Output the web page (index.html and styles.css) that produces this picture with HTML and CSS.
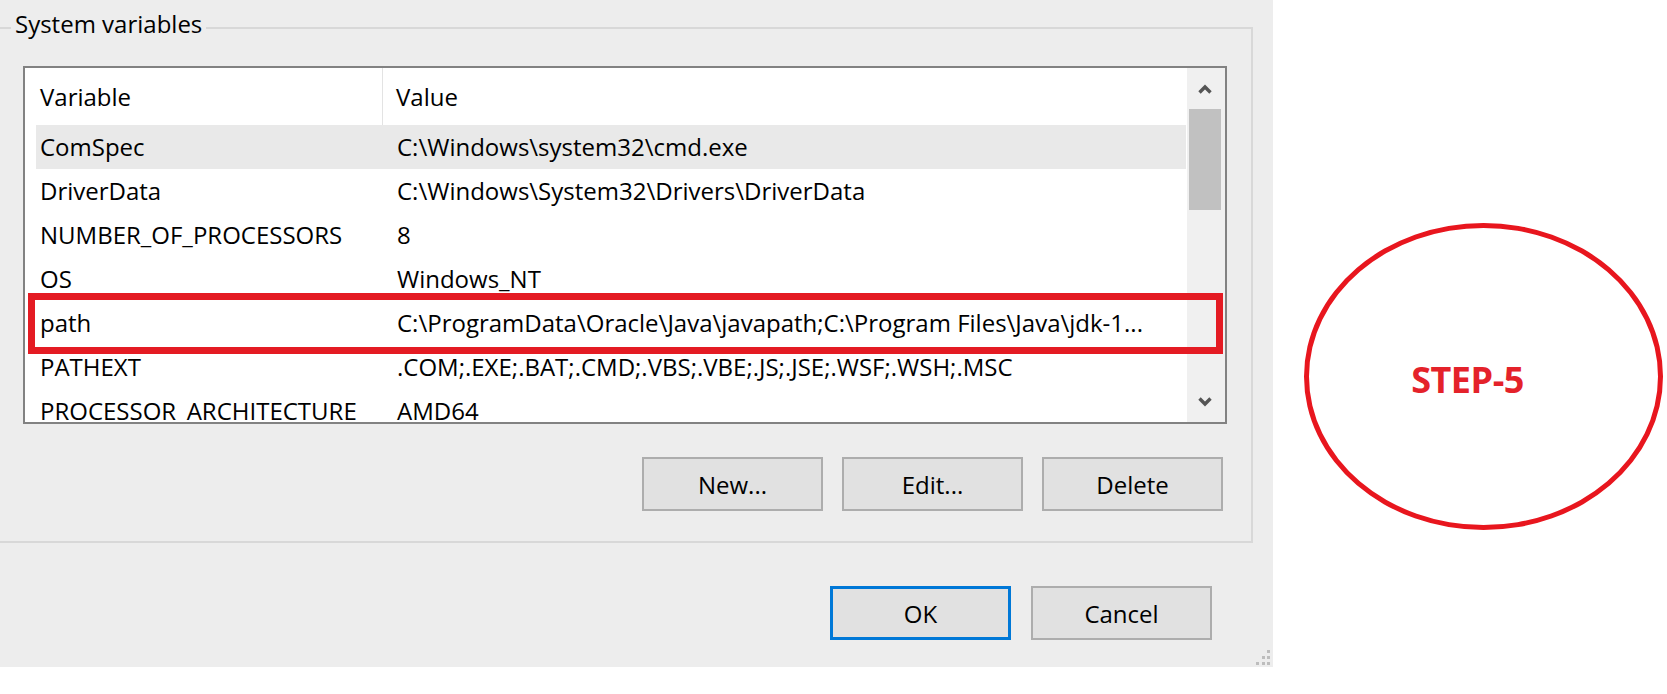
FILE: index.html
```html
<!DOCTYPE html>
<html lang="en">
<head>
<meta charset="utf-8">
<title>Environment Variables</title>
<link rel="stylesheet" href="styles.css">
</head>
<body>
<div class="page">
  <div class="dialog">
    <fieldset class="group">
      <legend>System variables</legend>
      <div class="listbox">
        <div class="list-main">
          <div class="list-header">
            <div class="hcell hcell-var">Variable</div>
            <div class="hcell hcell-val">Value</div>
          </div>
          <div class="list-body">
            <div class="row row-selected"><span class="c-var">ComSpec</span><span class="c-val">C:\Windows\system32\cmd.exe</span></div>
            <div class="row"><span class="c-var">DriverData</span><span class="c-val">C:\Windows\System32\Drivers\DriverData</span></div>
            <div class="row"><span class="c-var">NUMBER_OF_PROCESSORS</span><span class="c-val">8</span></div>
            <div class="row"><span class="c-var">OS</span><span class="c-val">Windows_NT</span></div>
            <div class="row"><span class="c-var">path</span><span class="c-val">C:\ProgramData\Oracle\Java\javapath;C:\Program Files\Java\jdk-1...</span></div>
            <div class="row"><span class="c-var">PATHEXT</span><span class="c-val">.COM;.EXE;.BAT;.CMD;.VBS;.VBE;.JS;.JSE;.WSF;.WSH;.MSC</span></div>
            <div class="row"><span class="c-var">PROCESSOR_ARCHITECTURE</span><span class="c-val">AMD64</span></div>
          </div>
        </div>
        <div class="scrollbar">
          <div class="sb-btn">
            <svg width="16" height="10" viewBox="0 0 16 10"><polyline points="2.5,8.5 8,3 13.5,8.5" fill="none" stroke="#555" stroke-width="3.4"/></svg>
          </div>
          <div class="sb-thumb"></div>
          <div class="sb-track"></div>
          <div class="sb-btn">
            <svg width="16" height="10" viewBox="0 0 16 10"><polyline points="2.5,1.5 8,7 13.5,1.5" fill="none" stroke="#555" stroke-width="3.4"/></svg>
          </div>
        </div>
        <div class="highlight-box"></div>
      </div>
      <div class="group-buttons">
        <button class="btn">New...</button>
        <button class="btn">Edit...</button>
        <button class="btn">Delete</button>
      </div>
    </fieldset>
    <div class="footer">
      <button class="btn btn-default">OK</button>
      <button class="btn">Cancel</button>
    </div>
    <svg class="grip" width="18" height="18" viewBox="0 0 18 18">
      <rect x="14" y="1" width="3" height="3" fill="#bdbdbd"/>
      <rect x="9" y="7" width="3" height="3" fill="#bdbdbd"/>
      <rect x="14" y="7" width="3" height="3" fill="#bdbdbd"/>
      <rect x="3" y="13" width="3" height="3" fill="#bdbdbd"/>
      <rect x="9" y="13" width="3" height="3" fill="#bdbdbd"/>
      <rect x="14" y="13" width="3" height="3" fill="#bdbdbd"/>
    </svg>
  </div>
  <div class="annotation">
    <div class="step-oval"><span class="step-label">STEP-5</span></div>
  </div>
</div>
</body>
</html>
```

FILE: styles.css
```css
* { box-sizing: border-box; }

html, body {
  margin: 0;
  padding: 0;
  background: #ffffff;
}

body {
  font-family: "Open Sans", "Noto Sans", sans-serif;
  font-size: 24px;
  color: #000;
  width: 1667px;
  height: 694px;
  overflow: hidden;
}

.page {
  display: flex;
  align-items: flex-start;
}

.dialog {
  position: relative;
  flex-shrink: 0;
  width: 1273px;
  height: 667px;
  background: #ededed;
  display: flex;
  flex-direction: column;
  overflow: hidden;
}

.group {
  margin: 8px 0 0 -20px;
  width: 1273px;
  min-width: 0;
  border: 2px solid #d8d8d8;
  padding: 18px 24px 30px 41px;
}

.group legend {
  margin-left: -12px;
  padding: 0 4px 8px;
  font-size: 24px;
  line-height: 32px;
  color: #000;
}

.listbox {
  position: relative;
  height: 358px;
  border: 2px solid #828282;
  background: #fff;
  display: flex;
}

.list-main {
  flex: 1;
  min-width: 0;
  overflow: hidden;
}

.list-header {
  display: flex;
  height: 57px;
  line-height: 57px;
}

.hcell {
  white-space: nowrap;
}

.hcell-var {
  width: 358px;
  padding-left: 15px;
  border-right: 1px solid #e3e3e3;
}

.hcell-val {
  padding-left: 13px;
}

.list-body {
  padding: 0 1px 0 11px;
}

.row {
  display: grid;
  grid-template-columns: 347px 1fr;
  height: 44px;
  line-height: 44px;
  white-space: nowrap;
}

.row-selected {
  background: #e9e9e9;
}

.c-var {
  padding-left: 4px;
  overflow: hidden;
}

.c-val {
  padding-left: 14px;
  overflow: hidden;
}

.scrollbar {
  width: 38px;
  background: #f0f0f0;
  display: flex;
  flex-direction: column;
}

.sb-btn {
  height: 41px;
  display: flex;
  align-items: center;
  justify-content: center;
  padding-right: 3px;
}

.sb-thumb {
  height: 101px;
  margin: 0 4px 0 2px;
  background: #c1c1c1;
}

.sb-track {
  flex: 1;
}

.highlight-box {
  position: absolute;
  left: 3px;
  top: 225px;
  width: 1195px;
  height: 61px;
  border: 7px solid #e41b23;
}

.group-buttons {
  display: flex;
  justify-content: flex-end;
  gap: 19px;
  margin-top: 33px;
  padding-right: 4px;
}

.btn {
  width: 181px;
  height: 54px;
  padding: 0;
  background: #e1e1e1;
  border: 2px solid #adadad;
  font-family: "Open Sans", "Noto Sans", sans-serif;
  font-size: 24px;
  color: #000;
}

.btn-default {
  border: 3px solid #0078d7;
}

.footer {
  display: flex;
  justify-content: flex-end;
  gap: 20px;
  margin-top: 43px;
  padding-right: 61px;
}

.grip {
  position: absolute;
  right: 2px;
  bottom: 0;
}

.annotation {
  width: 394px;
  padding: 223px 0 0 31px;
}

.step-oval {
  width: 359px;
  height: 307px;
  border: 5px solid #e8161e;
  border-radius: 50%;
  display: flex;
  align-items: center;
  justify-content: center;
  padding: 6px 32px 0 0;
}

.step-label {
  font-weight: 700;
  font-size: 36px;
  color: #e4222a;
  letter-spacing: -0.5px;
}
```
